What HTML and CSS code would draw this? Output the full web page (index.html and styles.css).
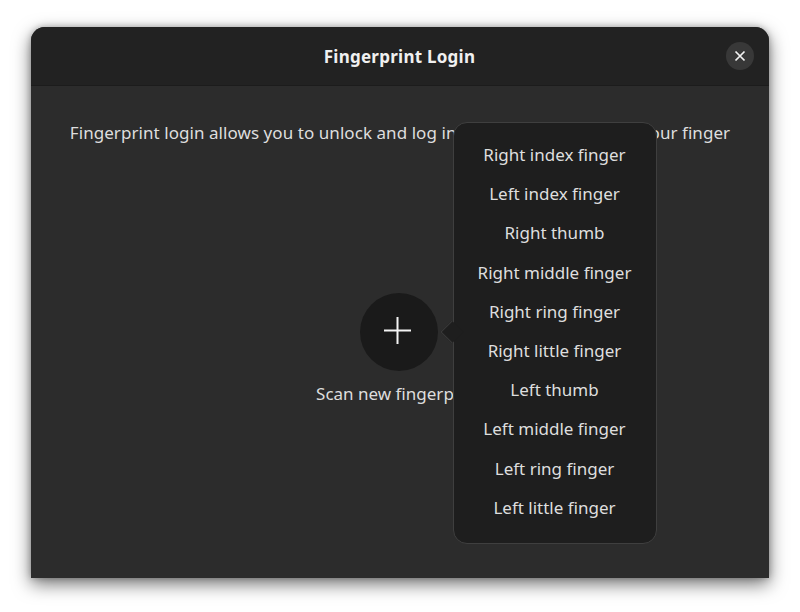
FILE: index.html
```html
<!DOCTYPE html>
<html lang="en">
<head>
<meta charset="utf-8">
<title>Fingerprint Login</title>
<link rel="stylesheet" href="styles.css">
</head>
<body>
<div class="window">
  <header class="titlebar">
    <h1 class="title">Fingerprint Login</h1>
    <button class="close" aria-label="Close">
      <svg width="12" height="12" viewBox="0 0 12 12"><path d="M1.5 1.5l9 9M10.5 1.5l-9 9" stroke="#f2f2f2" stroke-width="1.7" fill="none"/></svg>
    </button>
  </header>
  <main class="content">
    <p class="intro">Fingerprint login allows you to unlock and log into your computer with your finger</p>
    <div class="scan">
      <button class="add" aria-label="Scan new fingerprint">
        <svg class="plus" width="27" height="27" viewBox="0 0 27 27"><path d="M13.5 0v27M0 13.5h27" stroke="#f4f4f4" stroke-width="2" fill="none"/></svg>
      </button>
      <span class="scan-label">Scan new fingerprint</span>
    </div>
    <div class="popover">
      <span class="arrow"></span>
      <ul class="menu">
        <li>Right index finger</li>
        <li>Left index finger</li>
        <li>Right thumb</li>
        <li>Right middle finger</li>
        <li>Right ring finger</li>
        <li>Right little finger</li>
        <li>Left thumb</li>
        <li>Left middle finger</li>
        <li>Left ring finger</li>
        <li>Left little finger</li>
      </ul>
    </div>
  </main>
</div>
</body>
</html>
```
FILE: styles.css
```css
* { box-sizing: border-box; }
html, body { margin: 0; height: 100%; }
body {
  width: 800px;
  height: 612px;
  background: #fff;
  padding: 27px 31px 34px;
  font-family: "Noto Sans", "Open Sans", sans-serif;
  overflow: hidden;
}
.window {
  height: 551px;
  display: flex;
  flex-direction: column;
  background: #2c2c2c;
  border-radius: 14px 14px 0 0;
  box-shadow: 0 6px 18px rgba(0,0,0,.55), 0 0 6px rgba(0,0,0,.25);
  color: #dedede;
}
.titlebar {
  height: 59px;
  flex: none;
  display: flex;
  align-items: center;
  justify-content: center;
  position: relative;
  background: #222;
  border-bottom: 1px solid #1c1c1c;
  border-radius: 14px 14px 0 0;
}
.title {
  margin: 0 1px 0 0;
  font-size: 17px;
  letter-spacing: .25px;
  font-weight: 700;
  color: #f0f0f0;
}
.close {
  position: absolute;
  right: 15px;
  top: 15px;
  width: 28px;
  height: 28px;
  padding: 0;
  border: 0;
  border-radius: 50%;
  background: #383838;
  display: flex;
  align-items: center;
  justify-content: center;
}
.content {
  flex: 1;
  position: relative;
  display: flex;
  flex-direction: column;
  align-items: center;
}
.intro {
  margin: 36px 0 0;
  font-size: 17px;
  letter-spacing: .06px;
  line-height: 22px;
  white-space: nowrap;
}
.scan {
  margin-top: 149px;
  margin-left: -2px;
  display: flex;
  flex-direction: column;
  align-items: center;
  gap: 12px;
}
.add {
  width: 78px;
  height: 78px;
  padding: 0;
  border: 0;
  border-radius: 50%;
  background: #1a1a1a;
  display: flex;
  align-items: center;
  justify-content: center;
}
.plus {
  margin: 0 3px 3px 0;
}
.scan-label {
  font-size: 17px;
  line-height: 22px;
  white-space: nowrap;
}
.popover {
  position: absolute;
  left: 422px;
  top: 36px;
  width: 204px;
  height: 422px;
  background: #1e1e1e;
  border: 1px solid #3f3f3f;
  border-radius: 14px;
}
.arrow {
  position: absolute;
  left: -12.5px;
  top: 199px;
  width: 20px;
  height: 20px;
  background: #1e1e1e;
  border-left: 1px solid #3f3f3f;
  border-bottom: 1px solid #3f3f3f;
  transform: rotate(45deg) scale(.8);
}
.menu {
  position: relative;
  list-style: none;
  margin: 0;
  padding: 12px 1px 0 0;
}
.menu li {
  height: 39.2px;
  line-height: 39.2px;
  text-align: center;
  font-size: 17px;
  color: #dedede;
  white-space: nowrap;
}
```
